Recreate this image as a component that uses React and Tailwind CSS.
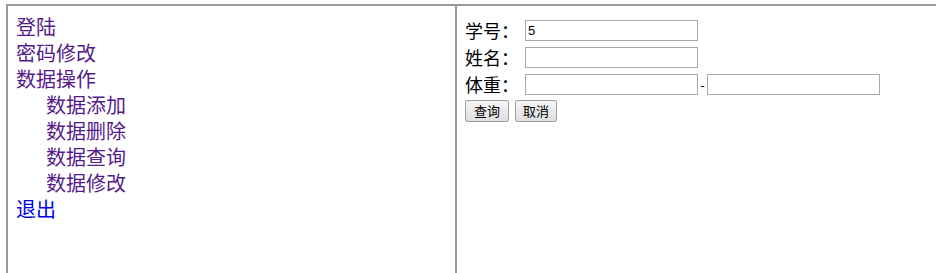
const cjk = { fontFamily: '"Noto Sans CJK SC", "Liberation Sans", sans-serif' }

function NavLink({ children, sub, color = 'text-[#551a8b]' }) {
  return (
    <a href="#" className={`block h-[26px] leading-[26px] text-[20px] ${color} ${sub ? 'pl-[30px]' : ''}`}>
      {children}
    </a>
  )
}

function Row({ label, children }) {
  return (
    <div className="flex h-[27px] items-center">
      <span className="w-[60px] text-[18px] text-black leading-[27px]">{label}</span>
      {children}
    </div>
  )
}

const inputCls = 'w-[173px] h-[21px] border border-[#a9a9a9] bg-white px-[2px] text-[13px] text-black outline-none'

export default function App() {
  return (
    <div className="w-[936px] h-[273px] bg-white overflow-hidden" style={cjk}>
      <div className="ml-[6px] mt-[4px] flex h-[269px] border-t-2 border-l-2 border-[#9a9a9a]">
        {/* 左侧菜单 */}
        <div className="w-[449px] shrink-0 border-r-2 border-[#9a9a9a] pl-[8px] pt-[8px]">
          <NavLink>登陆</NavLink>
          <NavLink>密码修改</NavLink>
          <NavLink>数据操作</NavLink>
          <NavLink sub>数据添加</NavLink>
          <NavLink sub>数据删除</NavLink>
          <NavLink sub>数据查询</NavLink>
          <NavLink sub>数据修改</NavLink>
          <NavLink color="text-[#0000ee]">退出</NavLink>
        </div>

        {/* 右侧表单 */}
        <div className="flex-1 pl-[8px] pt-[11px]">
          <form onSubmit={e => e.preventDefault()}>
            <Row label="学号：">
              <input className={inputCls} defaultValue="5" style={{ fontFamily: '"Liberation Sans", sans-serif' }} />
            </Row>
            <Row label="姓名：">
              <input className={inputCls} />
            </Row>
            <Row label="体重：">
              <input className={inputCls} />
              <span className="w-[9px] text-center text-[13px] text-black">-</span>
              <input className={inputCls} />
            </Row>
            <div className="mt-[2px] flex gap-[6px]">
              <button type="submit" className="h-[22px] w-[44px] rounded-[2px] border border-[#a0a0a0] bg-gradient-to-b from-[#f6f6f6] to-[#dedede] text-[13px] text-black">
                查询
              </button>
              <button type="button" className="h-[22px] w-[42px] rounded-[2px] border border-[#a0a0a0] bg-gradient-to-b from-[#f6f6f6] to-[#dedede] text-[13px] text-black">
                取消
              </button>
            </div>
          </form>
        </div>
      </div>
    </div>
  )
}
